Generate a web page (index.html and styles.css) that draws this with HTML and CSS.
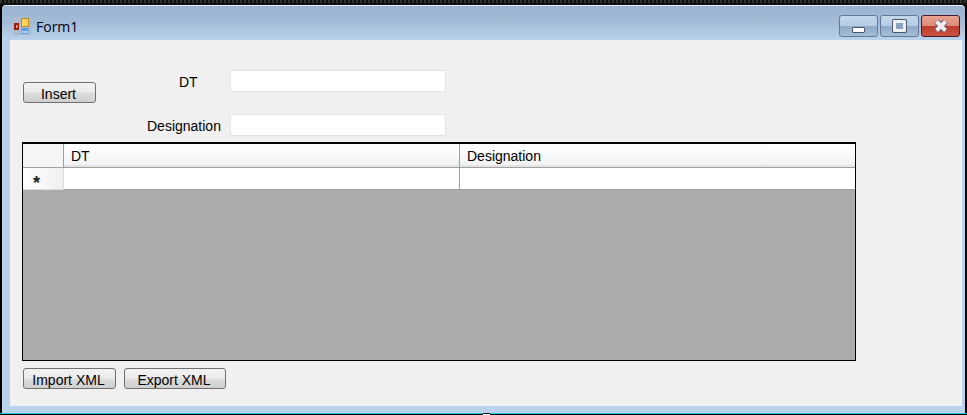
FILE: index.html
```html
<!DOCTYPE html>
<html lang="en">
<head>
<meta charset="utf-8">
<title>Form1</title>
<link rel="stylesheet" href="styles.css">
</head>
<body>
<div class="desktop-strip"></div>
<div class="window">
  <div class="titlebar">
    <svg class="app-icon" width="18" height="18" viewBox="0 0 18 18">
      <rect width="18" height="18" fill="#adbccd"/>
      <rect x="1" y="6" width="5" height="7" fill="#9c1c10"/>
      <rect x="3" y="8" width="1.6" height="3" fill="#ef9a80"/>
      <rect x="8.5" y="1.5" width="7" height="8" fill="#ffd45a" stroke="#b98a1c" stroke-width="1"/>
      <rect x="8.5" y="11" width="7" height="6" fill="#5f9be6"/>
      <rect x="9" y="14" width="6" height="2" fill="#a8ccf5"/>
    </svg>
    <span class="title">Form1</span>
    <div class="controls">
      <div class="ctl ctl-min"><span class="glyph-min"></span></div>
      <div class="ctl ctl-max"><span class="glyph-max"></span></div>
      <div class="ctl ctl-close">
        <svg width="16" height="14" viewBox="0 0 16 14">
          <path d="M3.5 2.5 L12.5 11.5 M12.5 2.5 L3.5 11.5" stroke="#5a5560" stroke-width="6" fill="none"/>
          <path d="M3.5 2.5 L12.5 11.5 M12.5 2.5 L3.5 11.5" stroke="#eeeef2" stroke-width="4" fill="none"/>
        </svg>
      </div>
    </div>
  </div>
  <div class="client">
    <div class="form">
      <button class="btn btn-insert">Insert</button>
      <label class="lbl lbl-dt">DT</label>
      <div class="input"></div>
      <label class="lbl lbl-des">Designation</label>
      <div class="input input-des"></div>
    </div>
    <div class="grid">
      <div class="row head">
        <div class="cell corner"></div>
        <div class="cell col-dt">DT</div>
        <div class="cell col-des">Designation</div>
      </div>
      <div class="row new">
        <div class="cell rowhead">*</div>
        <div class="cell col-dt"></div>
        <div class="cell col-des"></div>
      </div>
    </div>
    <div class="actions">
      <button class="btn btn-import">Import XML</button>
      <button class="btn btn-export">Export XML</button>
    </div>
  </div>
</div>
<div class="bottom-line"><span class="notch"></span></div>
</body>
</html>
```

FILE: styles.css
```css
* { box-sizing: border-box; }
html, body { margin: 0; padding: 0; }
body {
  width: 967px;
  height: 415px;
  overflow: hidden;
  background: #000;
  font-family: "Liberation Sans", Arial, sans-serif;
  font-size: 14px;
  color: #000;
  display: flex;
  flex-direction: column;
}
.desktop-strip {
  height: 5px;
  background: repeating-linear-gradient(90deg, #333 0 2px, #111 2px 4px);
  border-bottom: 2px solid #111;
  flex: none;
}
.window {
  flex: none;
  width: 963px;
  height: 408px;
  margin-left: 2px;
  background: #b9d3ec;
  border-top: 1px solid #e8eef5;
  border-radius: 4px 4px 0 0;
  display: flex;
  flex-direction: column;
}
.titlebar {
  flex: none;
  height: 34px;
  background: linear-gradient(180deg, #9ab4d2 0%, #a3bcd8 50%, #bad3ec 100%);
  display: flex;
  align-items: flex-start;
  padding: 11px 3px 0 11px;
  border-radius: 4px 4px 0 0;
}
.app-icon { flex: none; }
.title {
  font-family: "Open Sans", sans-serif;
  font-size: 14px;
  line-height: 20px;
  margin-left: 5px;
  color: #00000f;
}
.controls {
  margin-left: auto;
  margin-top: -2px;
  display: flex;
  gap: 2px;
  margin-right: 2px;
}
.ctl {
  width: 39px;
  height: 22px;
  border: 1px solid #64799a;
  border-radius: 3px;
  background: linear-gradient(180deg, #c4d7ea 0%, #b6cde4 48%, #90aac7 52%, #a5bdd6 100%);
  display: flex;
  align-items: center;
  justify-content: center;
}
.ctl-close {
  border-color: #4d1a2a;
  background: linear-gradient(180deg, #e9a393 0%, #dd8a78 48%, #bb3c2a 52%, #c9553f 100%);
}
.glyph-min {
  display: block;
  width: 13px;
  height: 6px;
  margin-top: 7px;
  background: #fff;
  border: 1px solid #4a566a;
  border-radius: 1px;
}
.glyph-max {
  display: block;
  width: 13px;
  height: 12px;
  background: #88a2bf;
  border: 3px solid #eef0f3;
  box-shadow: 0 0 0 1px #4a566a;
  border-radius: 1px;
}
.client {
  flex: none;
  margin: 0 3px 0 8px;
  height: 366px;
  background: #f0f0f0;
  padding: 30px 0 0 12px;
}
.form {
  display: grid;
  grid-template-columns: 125px 83px 216px;
  grid-template-rows: repeat(3, 22px);
}
.btn {
  display: block;
  height: 21px;
  padding: 2px 2px 0 0;
  font: inherit;
  line-height: 18px;
  color: #000;
  border: 1px solid #707070;
  border-radius: 3px;
  background: linear-gradient(180deg, #f2f2f2 0%, #ebebeb 48%, #dddddd 52%, #cfcfcf 100%);
  text-align: center;
}
.btn-insert {
  grid-column: 1;
  grid-row: 1 / span 2;
  width: 73px;
  margin: 12px 0 0 1px;
}
.lbl { display: block; line-height: 22px; white-space: nowrap; }
.lbl-dt { grid-column: 2; grid-row: 1; padding-left: 32px; margin-top: 1px; }
.lbl-des { grid-column: 2; grid-row: 3; margin-top: 1px; }
.input {
  grid-column: 3;
  grid-row: 1;
  background: #fff;
  border: 1px solid #e3e3e3;
  border-radius: 1px;
}
.input-des { grid-row: 3; }
.grid {
  margin-top: 6px;
  width: 834px;
  height: 219px;
  background: #ababab;
  border: 1px solid #000;
  border-top-width: 2px;
}
.row { display: flex; }
.cell { flex: none; border-right: 1px solid #a0a0a0; border-bottom: 1px solid #a0a0a0; }
.corner, .rowhead { width: 41px; }
.col-dt { width: 396px; padding-left: 7px; }
.col-des { width: 395px; padding-left: 7px; border-right: none; }
.head .cell {
  height: 24px;
  line-height: 24px;
  background: linear-gradient(180deg, #fff 0%, #f6f7f9 60%, #f0f1f3 100%);
  box-shadow: inset 0 -2px 0 #e4e4e4;
}
.head .corner { background: #f4f5f7; box-shadow: none; }
.new .cell { height: 22px; background: #fff; }
.new .rowhead {
  background: linear-gradient(90deg, #fff 0%, #f0f0f0 100%);
  border-right: 1px solid #dcdcdc;
  border-bottom: 1px solid #dcdcdc;
  color: #222;
  font-weight: bold;
  font-size: 18px;
  line-height: 30px;
  padding-left: 10px;
}
.actions { display: flex; gap: 8px; margin-top: 7px; padding-left: 1px; }
.btn-import { width: 93px; }
.btn-export { width: 102px; }
.bottom-line {
  flex: none;
  height: 2px;
  background: #000;
  border-top: 1px solid #1cc4dc;
  position: relative;
}
.notch {
  position: absolute;
  left: 483px;
  bottom: 0;
  width: 7px;
  height: 2px;
  background: #fff;
  border-top: 1px solid #000;
}
```
